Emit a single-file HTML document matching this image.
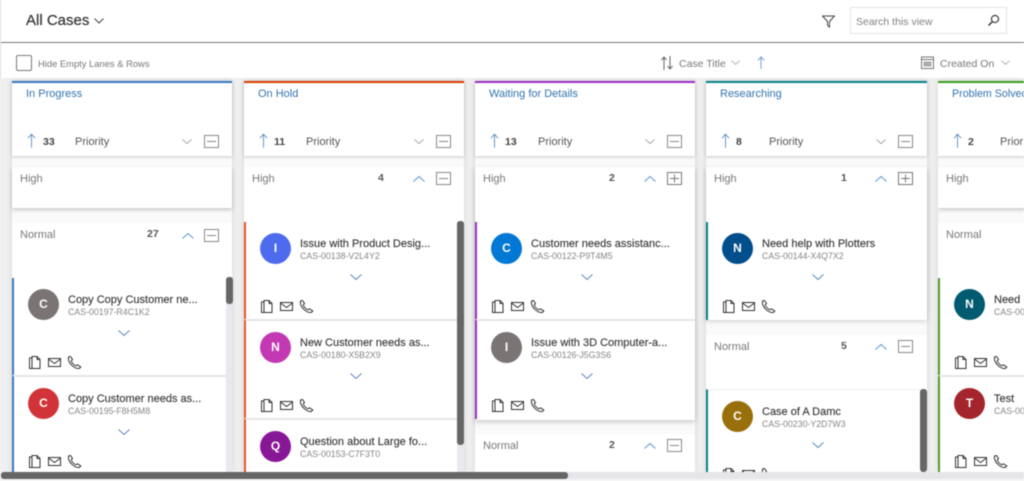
<!DOCTYPE html>
<html lang="en"><head><meta charset="utf-8"><title>All Cases</title>
<style>
html,body{margin:0;padding:0;width:1024px;height:481px;overflow:hidden;background:#fff}
body{position:relative;font-family:"Liberation Sans",sans-serif;color:#333}
#r{position:absolute;left:0;top:0;width:1024px;height:481px;overflow:hidden;filter:blur(.4px)}
#r div,#r span,#r svg{position:absolute}
.t{white-space:nowrap}
.lane{width:220px;top:81px;height:391px;background:#fafafa;box-shadow:0 0 6px rgba(0,0,0,.1)}
.head{left:0;top:0;width:220px;height:73px;background:#fff;border-top:2px solid;box-shadow:0 1px 3px rgba(0,0,0,.2)}
.name{left:14px;top:5px;font-size:11px;color:#3273ad;white-space:nowrap}
.cnt{left:27px;top:53px;font-size:10.5px;font-weight:bold;color:#444}
.pri{font-size:11px;color:#555;top:53px;white-space:nowrap}
.grp{left:0;width:220px;background:#fff}
.gl{left:8px;font-size:11px;color:#777;white-space:nowrap}
.gc{font-size:10.5px;font-weight:bold;color:#555;white-space:nowrap}
.card{left:0;width:214px;height:98px;background:#fff;border-left:2px solid}
.sep{border-top:2px solid #e6e6e6}
.av{left:14px;top:11px;width:31px;height:31px;border-radius:50%;color:#fff;font-size:12px;font-weight:bold;text-align:center;line-height:31px}
.ti{left:54px;top:16px;font-size:11px;color:#3a3a3a;white-space:nowrap;-webkit-text-stroke:.15px #3a3a3a}
.su{left:54px;top:29px;font-size:8.8px;color:#868686;white-space:nowrap}
.ic{left:15px;top:78px}
.sb{width:7px;background:#666;border-radius:3px}
.tr{width:6px;background:#e8e8ee}
</style></head><body>
<svg width="0" height="0" style="position:absolute"><defs>
<symbol id="ic" viewBox="0 0 53 13">
<path d="M3 2H.5V12.500H3M3 .5H8L11 3.500V12.500H3ZM8 .5V3.500H11" fill="none" stroke="#333" stroke-width="1"/>
<path d="M19.500 2.500H31.500V10.500H19.500ZM19.500 3L25.500 7.500L31.500 3" fill="none" stroke="#333" stroke-width="1"/>
<path d="M39.500 1L41.500 .5L43.500 3.500L42.200 5C43 7 45 9 46.800 9.800L48.500 8.800L51.800 11L50.300 12.500C45.500 13 38.500 7 39.500 1Z" fill="none" stroke="#333" stroke-width="1"/>
</symbol>
<symbol id="dn" viewBox="0 0 12 6"><path d="M.5 .5L6 5.500L11.500 .5" fill="none" stroke="#5b87c0" stroke-width="1"/></symbol>
<symbol id="dg" viewBox="0 0 12 6"><path d="M.5 .5L6 5.500L11.500 .5" fill="none" stroke="#999" stroke-width="1"/></symbol>
<symbol id="up" viewBox="0 0 12 6"><path d="M.5 5.500L6 .5L11.500 5.500" fill="none" stroke="#5b97d5" stroke-width="1"/></symbol>
<symbol id="ar" viewBox="0 0 10 16"><path d="M5 16V1M1 5.500L5 1L9 5.500" fill="none" stroke="#5a8cc0" stroke-width="1"/></symbol>
<symbol id="mi" viewBox="0 0 15 13"><path d="M.5 .5H14.500V12.500H.5ZM3 6.500H12" fill="none" stroke="#888" stroke-width="1"/></symbol>
<symbol id="pl" viewBox="0 0 15 13"><path d="M.5 .5H14.500V12.500H.5ZM3 6.500H12M7.500 2.500V10.500" fill="none" stroke="#777" stroke-width="1"/></symbol>
</defs></svg>
<div id="r">
<div style="left:0;top:78px;width:1024px;height:403px;background:#efefef"></div>
<div style="left:0;top:0;width:1px;height:78px;background:#ddd"></div>
<div style="left:1px;top:42px;width:1023px;height:1px;background:#777"></div>
<div class="t" style="left:26px;top:12px;font-size:15px;color:#333;-webkit-text-stroke:.2px #333">All Cases</div>
<svg style="left:94px;top:18px" width="10" height="6"><path d="M.5 .5L5 5L9.500 .5" fill="none" stroke="#444"/></svg>
<svg style="left:822px;top:15px" width="13" height="13" viewBox="0 0 13 13"><path d="M.5 1H12.500L7.500 6.500V12L5.500 10.500V6.500Z" fill="none" stroke="#444"/></svg>
<div style="left:850px;top:7px;width:155px;height:25px;border:1px solid #e3e3e3"></div>
<div class="t" style="left:856px;top:16px;font-size:10.5px;color:#808080">Search this view</div>
<svg style="left:987px;top:14px" width="13" height="13" viewBox="0 0 13 13"><circle cx="8" cy="5" r="3.600" fill="none" stroke="#333" stroke-width="1.100"/><path d="M5.400 7.600L1.500 11.500" stroke="#333" stroke-width="1.400"/></svg>
<div style="left:16px;top:55px;width:14px;height:14px;border:1px solid #777;border-radius:2px"></div>
<div class="t" style="left:38px;top:58px;font-size:9.400px;color:#777">Hide Empty Lanes &amp; Rows</div>
<svg style="left:661px;top:56px" width="12" height="14" viewBox="0 0 12 14"><path d="M3 14V1M.5 4L3 1L5.500 4M9 0V13M6.500 10L9 13L11.500 10" fill="none" stroke="#666"/></svg>
<div class="t" style="left:679px;top:58px;font-size:10.500px;color:#777">Case Title</div>
<svg style="left:731px;top:60px" width="9" height="5"><use href="#dg"/></svg>
<svg style="left:757px;top:56px" width="8" height="13"><use href="#ar"/></svg>
<svg style="left:921px;top:56px" width="13" height="13" viewBox="0 0 13 13"><path d="M.5 1H12.500V12.500H.5ZM.5 3.500H12.500" fill="none" stroke="#777"/><path d="M2.500 5.500H10.500V10.500H2.500Z" fill="#aaa"/></svg>
<div class="t" style="left:940px;top:58px;font-size:10.500px;color:#777">Created On</div>
<svg style="left:1001px;top:60px" width="9" height="5"><use href="#dg"/></svg>

<!-- Lane 1 -->
<div class="lane" style="left:12px">
<div class="head" style="border-color:#3a78c2"><div class="name">In Progress</div><svg style="left:15px;top:50px" width="9" height="15"><use href="#ar"/></svg><div class="cnt" style="left:31px">33</div><div class="pri" style="left:63px">Priority</div><svg style="left:170px;top:56px" width="10" height="5"><use href="#dg"/></svg><svg style="left:192px;top:52px" width="15" height="13"><use href="#mi"/></svg></div>
<div class="grp" style="top:86px;height:41px;box-shadow:0 2px 4px rgba(0,0,0,.2)"><div class="gl" style="top:6px">High</div></div>
<div class="grp" style="top:142px;height:249px"><div class="gl" style="top:6px">Normal</div><div class="gc" style="left:135px;top:5px">27</div><svg style="left:170px;top:10px" width="12" height="6"><use href="#up"/></svg><svg style="left:192px;top:6px" width="15" height="13"><use href="#mi"/></svg></div>
<div class="card" style="top:197px;border-color:#3a78c2"><div class="av" style="background:#7a7574">C</div><div class="ti">Copy Copy Customer ne...</div><div class="su">CAS-00197-R4C1K2</div><svg style="left:104px;top:52px" width="12" height="6"><use href="#dn"/></svg><svg class="ic" width="53" height="13"><use href="#ic"/></svg></div>
<div class="card sep" style="top:294px;height:95px;border-left:2px solid #3a78c2"><div class="av" style="background:#d13438">C</div><div class="ti">Copy Customer needs as...</div><div class="su">CAS-00195-F8H5M8</div><svg style="left:104px;top:52px" width="12" height="6"><use href="#dn"/></svg><svg class="ic" width="53" height="13"><use href="#ic"/></svg></div>
<div class="tr" style="left:214px;top:196px;height:195px"></div><div class="sb" style="left:214px;top:196px;height:27px"></div>
</div>

<!-- Lane 2 -->
<div class="lane" style="left:244px">
<div class="head" style="border-color:#d83b01"><div class="name">On Hold</div><svg style="left:15px;top:50px" width="9" height="15"><use href="#ar"/></svg><div class="cnt" style="left:30px">11</div><div class="pri" style="left:62px">Priority</div><svg style="left:170px;top:56px" width="10" height="5"><use href="#dg"/></svg><svg style="left:192px;top:52px" width="15" height="13"><use href="#mi"/></svg></div>
<div class="grp" style="top:86px;height:305px"><div class="gl" style="top:6px">High</div><div class="gc" style="left:134px;top:5px">4</div><svg style="left:169px;top:9px" width="12" height="6"><use href="#up"/></svg><svg style="left:192px;top:5px" width="15" height="13"><use href="#mi"/></svg></div>
<div class="card" style="top:141px;border-color:#e8532a"><div class="av" style="background:#4f6bed">I</div><div class="ti">Issue with Product Desig...</div><div class="su">CAS-00138-V2L4Y2</div><svg style="left:104px;top:52px" width="12" height="6"><use href="#dn"/></svg><svg class="ic" width="53" height="13"><use href="#ic"/></svg></div>
<div class="card sep" style="top:238px;border-left:2px solid #e8532a"><div class="av" style="background:#c239b3">N</div><div class="ti">New Customer needs as...</div><div class="su">CAS-00180-X5B2X9</div><svg style="left:104px;top:52px" width="12" height="6"><use href="#dn"/></svg><svg class="ic" width="53" height="13"><use href="#ic"/></svg></div>
<div class="card sep" style="top:337px;height:52px;overflow:hidden;border-left:2px solid #e8532a"><div class="av" style="background:#881798">Q</div><div class="ti">Question about Large fo...</div><div class="su">CAS-00153-C7F3T0</div></div>
<div class="tr" style="left:213px;top:140px;height:251px;width:7px"></div><div class="sb" style="left:213px;top:140px;height:224px"></div>
</div>

<!-- Lane 3 -->
<div class="lane" style="left:475px">
<div class="head" style="border-color:#9a30c4"><div class="name">Waiting for Details</div><svg style="left:15px;top:50px" width="9" height="15"><use href="#ar"/></svg><div class="cnt" style="left:30px">13</div><div class="pri" style="left:63px">Priority</div><svg style="left:170px;top:56px" width="10" height="5"><use href="#dg"/></svg><svg style="left:192px;top:52px" width="15" height="13"><use href="#mi"/></svg></div>
<div class="grp" style="top:86px;height:253px;box-shadow:0 2px 5px rgba(0,0,0,.2)"><div class="gl" style="top:6px">High</div><div class="gc" style="left:134px;top:5px">2</div><svg style="left:169px;top:9px" width="12" height="6"><use href="#up"/></svg><svg style="left:192px;top:5px" width="15" height="13"><use href="#pl"/></svg></div>
<div class="card" style="top:141px;width:218px;border-color:#9a30c4"><div class="av" style="background:#0078d4">C</div><div class="ti">Customer needs assistanc...</div><div class="su">CAS-00122-P9T4M5</div><svg style="left:104px;top:52px" width="12" height="6"><use href="#dn"/></svg><svg class="ic" width="53" height="13"><use href="#ic"/></svg></div>
<div class="card sep" style="top:238px;width:218px;border-left:2px solid #9a30c4"><div class="av" style="background:#7a7574">I</div><div class="ti">Issue with 3D Computer-a...</div><div class="su">CAS-00126-J5G3S6</div><svg style="left:104px;top:52px" width="12" height="6"><use href="#dn"/></svg><svg class="ic" width="53" height="13"><use href="#ic"/></svg></div>
<div class="grp" style="top:353px;height:38px"><div class="gl" style="top:6px">Normal</div><div class="gc" style="left:134px;top:5px">2</div><svg style="left:169px;top:9px" width="12" height="6"><use href="#up"/></svg><svg style="left:192px;top:5px" width="15" height="13"><use href="#mi"/></svg></div>
</div>

<!-- Lane 4 -->
<div class="lane" style="left:706px;width:221px">
<div class="head" style="width:221px;border-color:#038387"><div class="name">Researching</div><svg style="left:15px;top:50px" width="9" height="15"><use href="#ar"/></svg><div class="cnt" style="left:30px">8</div><div class="pri" style="left:63px">Priority</div><svg style="left:170px;top:56px" width="10" height="5"><use href="#dg"/></svg><svg style="left:192px;top:52px" width="15" height="13"><use href="#mi"/></svg></div>
<div class="grp" style="top:86px;width:221px;height:152px;box-shadow:0 2px 5px rgba(0,0,0,.2)"><div class="gl" style="top:6px">High</div><div class="gc" style="left:135px;top:5px">1</div><svg style="left:169px;top:9px" width="12" height="6"><use href="#up"/></svg><svg style="left:192px;top:5px" width="15" height="13"><use href="#pl"/></svg></div>
<div class="card" style="top:141px;width:219px;border-color:#038387"><div class="av" style="background:#004e8c">N</div><div class="ti">Need help with Plotters</div><div class="su">CAS-00144-X4Q7X2</div><svg style="left:104px;top:52px" width="12" height="6"><use href="#dn"/></svg><svg class="ic" width="53" height="13"><use href="#ic"/></svg></div>
<div class="grp" style="top:254px;width:221px;height:137px"><div class="gl" style="top:6px">Normal</div><div class="gc" style="left:135px;top:5px">5</div><svg style="left:169px;top:9px" width="12" height="6"><use href="#up"/></svg><svg style="left:192px;top:5px" width="15" height="13"><use href="#mi"/></svg></div>
<div class="card" style="top:308px;height:82px;overflow:hidden;border-top:1px solid #eee;border-left:2px solid #038387"><div class="av" style="background:#986f0b">C</div><div class="ti">Case of A Damc</div><div class="su">CAS-00230-Y2D7W3</div><svg style="left:104px;top:52px" width="12" height="6"><use href="#dn"/></svg><svg class="ic" width="53" height="13"><use href="#ic"/></svg></div>
<div class="sb" style="left:214px;top:308px;height:83px"></div>
</div>

<!-- Lane 5 -->
<div class="lane" style="left:938px;width:86px;overflow:hidden">
<div class="head" style="border-color:#3a9a1c"><div class="name" style="font-size:10.700px">Problem Solved</div><svg style="left:15px;top:50px" width="9" height="15"><use href="#ar"/></svg><div class="cnt" style="left:30px">2</div><div class="pri" style="left:62px">Priority</div></div>
<div class="grp" style="top:86px;height:41px;box-shadow:0 2px 4px rgba(0,0,0,.2)"><div class="gl" style="top:6px">High</div></div>
<div class="grp" style="top:142px;height:249px"><div class="gl" style="top:6px">Normal</div></div>
<div class="card" style="top:197px;border-color:#4a9e28"><div class="av" style="background:#005b70">N</div><div class="ti">Need help</div><div class="su">CAS-00146-T1V8K3</div><svg class="ic" width="53" height="13"><use href="#ic"/></svg></div>
<div class="card sep" style="top:294px;height:95px;border-left:2px solid #4a9e28"><div class="av" style="background:#a4262c">T</div><div class="ti">Test</div><div class="su">CAS-00201-M3W6L1</div><svg class="ic" width="53" height="13"><use href="#ic"/></svg></div>
</div>

<!-- Horizontal scrollbar -->
<div style="left:0;top:472px;width:1024px;height:7px;background:#e6e6ea"></div>
<div style="left:1px;top:472px;width:567px;height:7px;background:#666;border-radius:3px"></div>
<div style="left:0;top:479px;width:1024px;height:2px;background:#f4f4f4"></div>
</div>
</body></html>
